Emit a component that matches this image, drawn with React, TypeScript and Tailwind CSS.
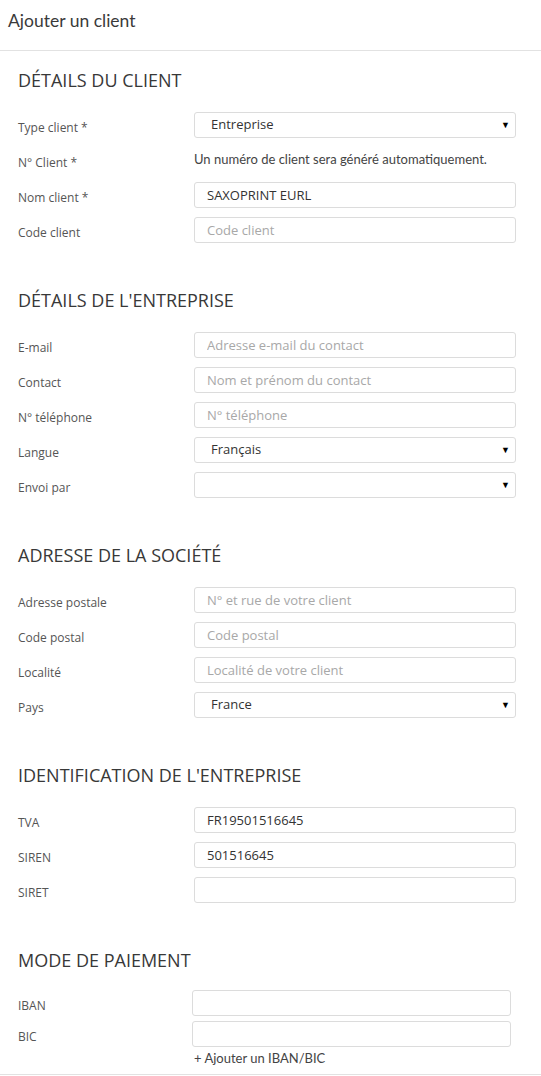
import React from 'react';

type Field =
  | { kind: 'input'; label: string; value?: string; placeholder?: string }
  | { kind: 'select'; label: string; value?: string }
  | { kind: 'text'; label: string; value: string };

const sections: Array<{ title: string; fields: Field[] }> = [
  {
    title: 'DÉTAILS DU CLIENT',
    fields: [
      { kind: 'select', label: 'Type client *', value: 'Entreprise' },
      {
        kind: 'text',
        label: 'N° Client *',
        value: 'Un numéro de client sera généré automatiquement.',
      },
      { kind: 'input', label: 'Nom client *', value: 'SAXOPRINT EURL' },
      { kind: 'input', label: 'Code client', placeholder: 'Code client' },
    ],
  },
  {
    title: "DÉTAILS DE L'ENTREPRISE",
    fields: [
      { kind: 'input', label: 'E-mail', placeholder: 'Adresse e-mail du contact' },
      { kind: 'input', label: 'Contact', placeholder: 'Nom et prénom du contact' },
      { kind: 'input', label: 'N° téléphone', placeholder: 'N° téléphone' },
      { kind: 'select', label: 'Langue', value: 'Français' },
      { kind: 'select', label: 'Envoi par' },
    ],
  },
  {
    title: 'ADRESSE DE LA SOCIÉTÉ',
    fields: [
      { kind: 'input', label: 'Adresse postale', placeholder: 'N° et rue de votre client' },
      { kind: 'input', label: 'Code postal', placeholder: 'Code postal' },
      { kind: 'input', label: 'Localité', placeholder: 'Localité de votre client' },
      { kind: 'select', label: 'Pays', value: 'France' },
    ],
  },
  {
    title: "IDENTIFICATION DE L'ENTREPRISE",
    fields: [
      { kind: 'input', label: 'TVA', value: 'FR19501516645' },
      { kind: 'input', label: 'SIREN', value: '501516645' },
      { kind: 'input', label: 'SIRET' },
    ],
  },
];

const openSans = "font-['Open_Sans',sans-serif]";
const lato = "font-['Lato',sans-serif]";

function Control({ field }: { field: Field }) {
  if (field.kind === 'text') {
    return (
      <div className={`${lato} flex h-[26px] items-center text-[13px] text-[#444]`}>
        {field.value}
      </div>
    );
  }
  if (field.kind === 'select') {
    return (
      <div
        className={`${openSans} flex h-[26px] items-center justify-between rounded-[3px] border border-[#dcdcdc] bg-white pl-4 pr-[5px] text-[13px] text-[#333]`}
      >
        <span>{field.value ?? ''}</span>
        <span className="text-[9px] text-black">▼</span>
      </div>
    );
  }
  return (
    <input
      className={`${openSans} h-[26px] w-full rounded-[3px] border border-[#dcdcdc] bg-white px-3 text-[13px] text-[#333] outline-none placeholder:text-[#a8a8a8]`}
      defaultValue={field.value}
      placeholder={field.placeholder}
    />
  );
}

function Heading({ children }: { children: React.ReactNode }) {
  return (
    <h2 className={`${openSans} h-6 text-[18px] leading-6 text-[#383838]`}>
      {children}
    </h2>
  );
}

function Section({ title, fields }: { title: string; fields: Field[] }) {
  return (
    <section className="pb-[28px] pl-[18px] pt-[17px]">
      <Heading>{title}</Heading>
      <div className="mt-5 grid grid-cols-[176px_322px] gap-y-[9px]">
        {fields.map((field) => (
          <React.Fragment key={field.label}>
            <label
              className={`${openSans} flex items-center pt-[6px] text-[12px] text-[#555]`}
            >
              {field.label}
            </label>
            <Control field={field} />
          </React.Fragment>
        ))}
      </div>
    </section>
  );
}

export default function App() {
  return (
    <div className="w-[541px] bg-white">
      <header className="flex h-[51px] items-center border-b border-[#e2e2e2] pb-[7px] pl-2">
        <h1 className={`${lato} text-[17.5px] text-[#3a3a3a]`}>Ajouter un client</h1>
      </header>

      {sections.map((section) => (
        <Section key={section.title} {...section} />
      ))}

      <section className="border-b border-[#e2e2e2] pb-2 pl-[18px] pt-[17px]">
        <Heading>MODE DE PAIEMENT</Heading>
        <div className="mt-[18px] grid grid-cols-[174px_319px] gap-y-[5px]">
          {['IBAN', 'BIC'].map((label) => (
            <React.Fragment key={label}>
              <label
                className={`${openSans} flex items-center pt-[6px] text-[12px] text-[#555]`}
              >
                {label}
              </label>
              <input className="h-[26px] w-full rounded-[3px] border border-[#dcdcdc] bg-white outline-none" />
            </React.Fragment>
          ))}
        </div>
        <div
          className={`${lato} ml-[176px] mt-[3px] h-4 text-[13px] leading-4 text-[#444]`}
        >
          + Ajouter un IBAN/BIC
        </div>
      </section>
    </div>
  );
}
